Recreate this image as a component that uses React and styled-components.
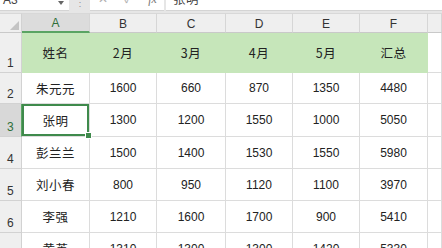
import React from 'react';
import styled, { createGlobalStyle, css } from 'styled-components';

const GlobalStyle = createGlobalStyle`
  html, body {
    margin: 0;
    padding: 0;
    background: #ffffff;
    overflow: hidden;
  }
  body {
    font-family: 'Liberation Sans', 'Noto Sans CJK SC', sans-serif;
  }
`;

const COLS = [68, 67, 69, 67, 67, 68];
const LETTERS = ['A', 'B', 'C', 'D', 'E', 'F'];

const rows = [
  ['姓名', '2月', '3月', '4月', '5月', '汇总'],
  ['朱元元', '1600', '660', '870', '1350', '4480'],
  ['张明', '1300', '1200', '1550', '1000', '5050'],
  ['彭兰兰', '1500', '1400', '1530', '1550', '5980'],
  ['刘小春', '800', '950', '1120', '1100', '3970'],
  ['李强', '1210', '1600', '1700', '900', '5410'],
  ['黄英', '1310', '1300', '1300', '1420', '5330'],
];

const ROW_HEIGHTS = [40, 31, 33, 32, 32, 32, 32];

const Page = styled.div`
  width: 442px;
  height: 248px;
  overflow: hidden;
  display: flex;
  flex-direction: column;
  color: #222;
`;

const FormulaBar = styled.div`
  height: 13px;
  flex: none;
  display: flex;
  align-items: flex-start;
  background: #e6e6e6;
  overflow: hidden;
`;

const Box = styled.div`
  height: 11px;
  width: ${p => (p.$width ? `${p.$width}px` : 'auto')};
  flex: ${p => (p.$width ? 'none' : '1')};
  margin-left: ${p => p.$gap || 0}px;
  background: #fff;
  border-bottom: 1px solid #d4d4d4;
  box-sizing: border-box;
  display: flex;
  align-items: flex-end;
  font-size: 12px;
  line-height: 12px;
  color: #444;
  overflow: hidden;
`;

const BoxText = styled.span`
  margin-left: ${p => p.$left || 0}px;
  transform: translateY(-4px);
  white-space: nowrap;
`;

const Caret = styled.span`
  margin-left: auto;
  margin-right: 5px;
  transform: translateY(-5px);
  width: 0;
  height: 0;
  border-left: 3px solid transparent;
  border-right: 3px solid transparent;
  border-top: 4px solid #666;
`;

const Dots = styled.div`
  width: 21px;
  flex: none;
  display: flex;
  justify-content: center;
  color: #9a9a9a;
  font-size: 10px;
  line-height: 6px;
`;

const IconRow = styled.div`
  display: flex;
  gap: 16px;
  padding-left: 8px;
  transform: translateY(-5px);
  color: #b0b0b0;
  font-size: 12px;
`;

const Fx = styled.span`
  font-style: italic;
  font-family: 'Liberation Serif', serif;
  color: #777;
`;

const Sheet = styled.div`
  display: grid;
  grid-template-columns: 22px ${COLS.map(c => `${c}px`).join(' ')} 1fr;
  grid-template-rows: 20px ${ROW_HEIGHTS.map(h => `${h}px`).join(' ')};
`;

const Corner = styled.div`
  background: #efefef;
  border-right: 1px solid #d2d2d2;
  border-bottom: 1px solid #c9c9c9;
  border-top: 1px solid #d8d8d8;
  box-sizing: border-box;
  position: relative;
  &::after {
    content: '';
    position: absolute;
    right: 2px;
    bottom: 2px;
    width: 0;
    height: 0;
    border-left: 9px solid transparent;
    border-bottom: 9px solid #c4c4c4;
  }
`;

const ColHead = styled.div`
  background: ${p => (p.$active ? '#dcdcdc' : '#efefef')};
  border-top: 1px solid #d8d8d8;
  border-right: 1px solid #d6d6d6;
  border-bottom: ${p => (p.$active ? '2px solid #5aa463' : '1px solid #c9c9c9')};
  box-sizing: border-box;
  display: flex;
  align-items: center;
  justify-content: center;
  font-size: 12px;
  color: ${p => (p.$active ? '#2f6f3a' : '#333')};
  padding-top: 1px;
`;

const RowHead = styled.div`
  background: ${p => (p.$active ? '#d8d8d8' : '#efefef')};
  border-right: 1px solid ${p => (p.$active ? '#5aa463' : '#d2d2d2')};
  border-bottom: 1px solid #d2d2d2;
  box-sizing: border-box;
  display: flex;
  align-items: flex-end;
  padding-left: 7px;
  padding-bottom: 2px;
  font-size: 12px;
  color: ${p => (p.$active ? '#2f6f3a' : '#333')};
`;

const Cell = styled.div`
  box-sizing: border-box;
  border-right: 1px solid #dcdcdc;
  border-bottom: 1px solid #dcdcdc;
  display: flex;
  align-items: center;
  justify-content: center;
  font-size: 12px;
  color: #222;
  white-space: nowrap;
  background: ${p => (p.$header ? '#c6e6ba' : '#fff')};
  ${p =>
    p.$header &&
    css`
      border-right-color: #c6e6ba;
      border-bottom-color: #c6e6ba;
    `}
  ${p =>
    p.$selected &&
    css`
      position: relative;
      box-shadow: inset 0 0 0 2px #3f8a4c;
      &::after {
        content: '';
        position: absolute;
        right: -3px;
        bottom: -3px;
        width: 5px;
        height: 5px;
        background: #3f8a4c;
        border: 1px solid #fff;
        z-index: 2;
      }
    `}
`;

const Name = styled.span`
  font-family: 'Noto Sans CJK SC', sans-serif;
  font-size: 12.5px;
  letter-spacing: 0.5px;
`;

const Num = styled.span`
  font-family: 'Liberation Sans', 'Noto Sans CJK SC', sans-serif;
  font-size: 12px;
`;

const isNum = s => /^\d+$/.test(s);

export default function App() {
  return (
    <>
      <GlobalStyle />
      <Page>
        <FormulaBar>
          <Box $width={69}>
            <BoxText $left={3}>A3</BoxText>
            <Caret />
          </Box>
          <Dots>⋮</Dots>
          <Box $width={74}>
            <IconRow>
              <span>✕</span>
              <span>✓</span>
              <Fx>fx</Fx>
            </IconRow>
          </Box>
          <Box $gap={2}>
            <BoxText $left={7}>
              <Name>张明</Name>
            </BoxText>
          </Box>
        </FormulaBar>
        <Sheet>
          <Corner />
          {LETTERS.map(l => (
            <ColHead key={l} $active={l === 'A'}>
              {l}
            </ColHead>
          ))}
          <ColHead />
          {rows.map((r, ri) => (
            <React.Fragment key={ri}>
              <RowHead $active={ri === 2}>{ri + 1}</RowHead>
              {r.map((v, ci) => (
                <Cell key={ci} $header={ri === 0} $selected={ri === 2 && ci === 0}>
                  {isNum(v) ? <Num>{v}</Num> : <Name>{v}</Name>}
                </Cell>
              ))}
              <Cell />
            </React.Fragment>
          ))}
        </Sheet>
      </Page>
    </>
  );
}
